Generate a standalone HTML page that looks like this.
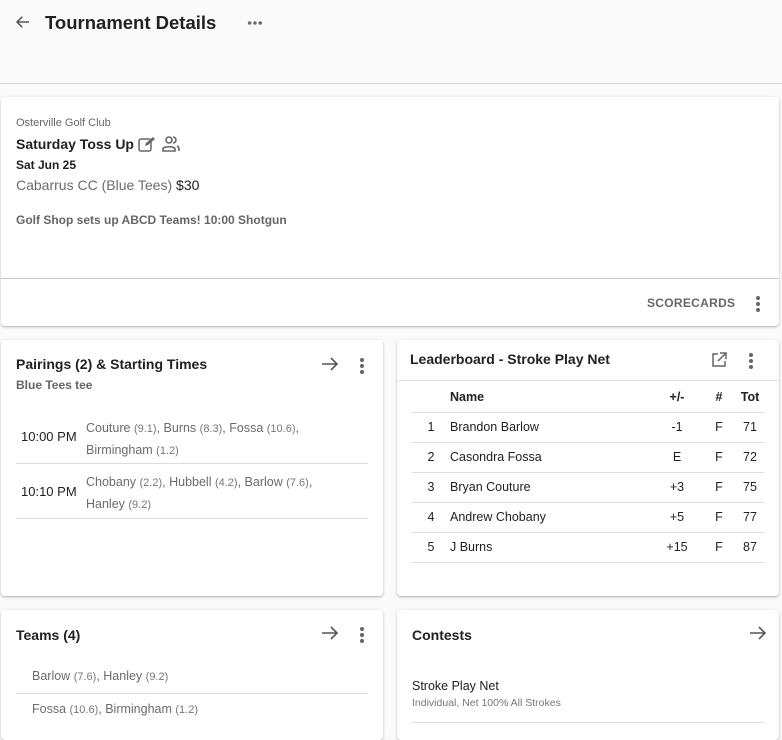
<!DOCTYPE html>
<html><head><meta charset="utf-8">
<style>
*{margin:0;padding:0;box-sizing:border-box}
body{width:782px;height:724px;overflow:hidden;background:#fafafa;font-family:"Liberation Sans",sans-serif;color:#212121;position:relative}
.a{position:absolute;white-space:nowrap}
.card{position:absolute;background:#fff;border-radius:4px;box-shadow:0 1px 3px rgba(0,0,0,.2),0 1px 1px rgba(0,0,0,.12)}
.hr{position:absolute;height:1px;background:#dcdcdc}
.g{color:#6b6b6b}
.s{font-size:11px;color:#777}
.dots{position:absolute;width:4px}
.dots i{display:block;width:4px;height:4px;border-radius:2px;background:#666;margin-bottom:2px}
.lb td{font-size:12.5px;height:30px;border-bottom:1px solid #e0e0e0}
</style></head><body>
<svg class="a" style="left:14px;top:13px" width="18" height="18" viewBox="0 0 24 24"><path d="M20 12H5M11 5l-7 7 7 7" fill="none" stroke="#555" stroke-width="2"/></svg>
<div class="a" style="left:45px;top:12px;font-size:18.5px;font-weight:bold;color:#222">Tournament Details</div>
<div class="a" style="left:247px;top:21px;width:16px;height:4px;background:radial-gradient(circle,#666 1.5px,transparent 2px) 0 0/5.3px 4px repeat-x"></div>
<div class="hr" style="left:0;top:83px;width:782px;background:#d6d6d6"></div>

<div class="card" style="left:1px;top:97px;width:778px;height:229px"></div>
<div class="a" style="left:16px;top:117px;font-size:11px;color:#666">Osterville Golf Club</div>
<div class="a" style="left:16px;top:136px;font-size:14px;font-weight:bold">Saturday Toss Up</div>
<svg class="a" style="left:138px;top:136px" width="18" height="16" viewBox="0 0 18 16"><rect x="1" y="3" width="12" height="12" rx="2" fill="none" stroke="#666" stroke-width="1.5"/><path d="M7 10l1-3 7-6 2 2-7 6z" fill="#666"/></svg>
<svg class="a" style="left:162px;top:136px" width="19" height="16" viewBox="0 0 19 16"><circle cx="7" cy="4" r="3" fill="none" stroke="#666" stroke-width="1.6"/><path d="M1 15v-2c0-3 12-3 12 0v2z" fill="none" stroke="#666" stroke-width="1.6"/><path d="M11 1a3 3 0 010 6M15 10c2 1 2 2 2 5" fill="none" stroke="#666" stroke-width="1.6"/></svg>
<div class="a" style="left:16px;top:158px;font-size:12px;font-weight:bold">Sat Jun 25</div>
<div class="a" style="left:16px;top:177px;font-size:14px"><span class="g">Cabarrus CC (Blue Tees)</span> $30</div>
<div class="a" style="left:16px;top:213px;font-size:12px;font-weight:bold;color:#666">Golf Shop sets up ABCD Teams! 10:00 Shotgun</div>
<div class="hr" style="left:1px;top:278px;width:778px;background:#c8c8c8"></div>
<div class="a" style="left:647px;top:296px;font-size:12px;font-weight:bold;color:#666;letter-spacing:.3px">SCORECARDS</div>
<div class="dots" style="left:756px;top:296px"><i></i><i></i><i></i></div>

<div class="card" style="left:1px;top:340px;width:382px;height:256px"></div>
<div class="a" style="left:16px;top:356px;font-size:14px;font-weight:bold">Pairings (2) &amp; Starting Times</div>
<svg class="a" style="left:321px;top:356px" width="18" height="16" viewBox="0 0 18 16"><path d="M1 8h15M10 2l6 6-6 6" fill="none" stroke="#555" stroke-width="1.6"/></svg>
<div class="dots" style="left:360px;top:358px"><i></i><i></i><i></i></div>
<div class="a" style="left:16px;top:378px;font-size:12px;font-weight:bold;color:#666">Blue Tees tee</div>
<div class="a" style="left:21px;top:429px;font-size:13px">10:00 PM</div>
<div class="a g" style="left:86px;top:418px;font-size:12.5px;line-height:21px">Couture <span class="s">(9.1)</span>, Burns <span class="s">(8.3)</span>, Fossa <span class="s">(10.6)</span>,<br>Birmingham <span class="s">(1.2)</span></div>
<div class="hr" style="left:16px;top:463px;width:352px"></div>
<div class="a" style="left:21px;top:484px;font-size:13px">10:10 PM</div>
<div class="a g" style="left:86px;top:472px;font-size:12.5px;line-height:21px">Chobany <span class="s">(2.2)</span>, Hubbell <span class="s">(4.2)</span>, Barlow <span class="s">(7.6)</span>,<br>Hanley <span class="s">(9.2)</span></div>
<div class="hr" style="left:16px;top:518px;width:352px"></div>

<div class="card" style="left:397px;top:340px;width:382px;height:256px"></div>
<div class="a" style="left:410px;top:351px;font-size:14px;font-weight:bold">Leaderboard - Stroke Play Net</div>
<svg class="a" style="left:711px;top:352px" width="16" height="16" viewBox="0 0 16 16"><path d="M7 2H2v12h12V9M9 1h6v6M15 1L7 9" fill="none" stroke="#666" stroke-width="1.5"/></svg>
<div class="dots" style="left:749px;top:353px"><i></i><i></i><i></i></div>
<div class="hr" style="left:397px;top:380px;width:382px;background:#e0e0e0"></div>
<table class="a lb" style="left:412px;top:382px;width:352px;border-collapse:collapse">
<tr style="font-weight:bold"><td style="width:38px"></td><td style="font-weight:bold">Name</td><td style="text-align:center;width:50px;font-weight:bold">+/-</td><td style="text-align:center;width:34px;font-weight:bold">#</td><td style="text-align:center;width:28px;font-weight:bold">Tot</td></tr>
<tr><td style="text-align:center">1</td><td>Brandon Barlow</td><td align="center">-1</td><td align="center">F</td><td align="center">71</td></tr>
<tr><td style="text-align:center">2</td><td>Casondra Fossa</td><td align="center">E</td><td align="center">F</td><td align="center">72</td></tr>
<tr><td style="text-align:center">3</td><td>Bryan Couture</td><td align="center">+3</td><td align="center">F</td><td align="center">75</td></tr>
<tr><td style="text-align:center">4</td><td>Andrew Chobany</td><td align="center">+5</td><td align="center">F</td><td align="center">77</td></tr>
<tr><td style="text-align:center">5</td><td>J Burns</td><td align="center">+15</td><td align="center">F</td><td align="center">87</td></tr>
</table>

<div class="card" style="left:1px;top:610px;width:382px;height:130px"></div>
<div class="a" style="left:16px;top:627px;font-size:14px;font-weight:bold">Teams (4)</div>
<svg class="a" style="left:321px;top:625px" width="18" height="16" viewBox="0 0 18 16"><path d="M1 8h15M10 2l6 6-6 6" fill="none" stroke="#555" stroke-width="1.6"/></svg>
<div class="dots" style="left:360px;top:627px"><i></i><i></i><i></i></div>
<div class="a g" style="left:32px;top:669px;font-size:12.5px">Barlow <span class="s">(7.6)</span>, Hanley <span class="s">(9.2)</span></div>
<div class="hr" style="left:16px;top:693px;width:352px"></div>
<div class="a g" style="left:32px;top:702px;font-size:12.5px">Fossa <span class="s">(10.6)</span>, Birmingham <span class="s">(1.2)</span></div>

<div class="card" style="left:397px;top:610px;width:382px;height:130px"></div>
<div class="a" style="left:412px;top:627px;font-size:14px;font-weight:bold">Contests</div>
<svg class="a" style="left:749px;top:625px" width="18" height="16" viewBox="0 0 18 16"><path d="M1 8h15M10 2l6 6-6 6" fill="none" stroke="#555" stroke-width="1.6"/></svg>
<div class="a" style="left:412px;top:679px;font-size:12.5px">Stroke Play Net</div>
<div class="a" style="left:412px;top:697px;font-size:10.5px;color:#777">Individual, Net 100% All Strokes</div>
<div class="hr" style="left:412px;top:722px;width:352px"></div>
</body></html>
